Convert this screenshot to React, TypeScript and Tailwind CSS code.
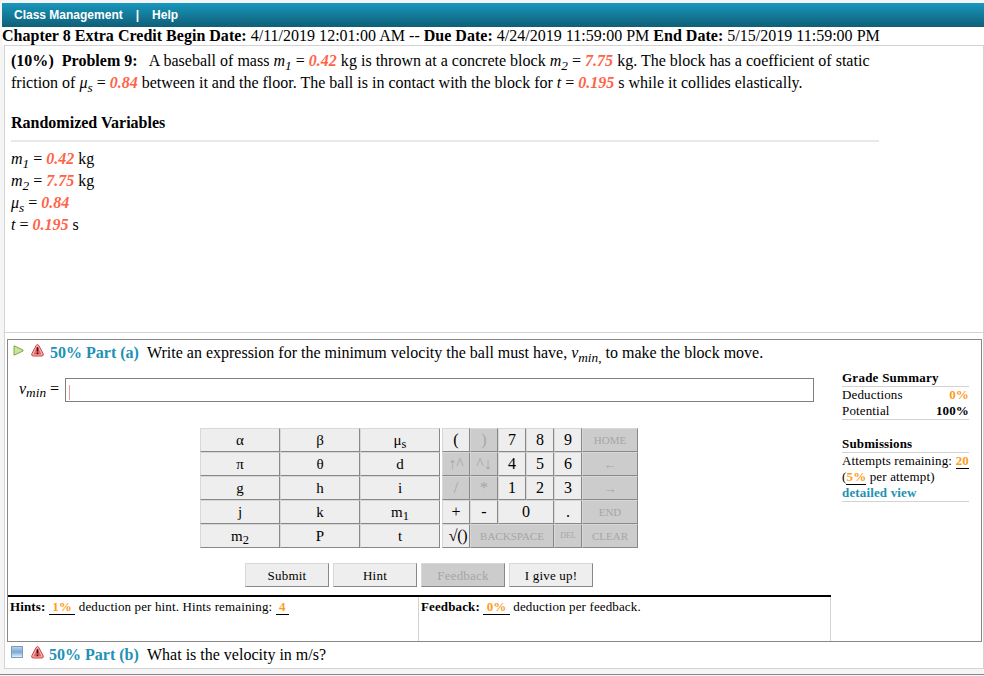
import React from 'react';
import { clsx } from 'clsx';

interface KeyDef {
  label: React.ReactNode;
  off?: boolean;
  className?: string;
}

const symbolKeys: KeyDef[] = [
  { label: 'α' },
  { label: 'β' },
  { label: <>μ<Sub>s</Sub></> },
  { label: 'π' },
  { label: 'θ' },
  { label: 'd' },
  { label: 'g' },
  { label: 'h' },
  { label: 'i' },
  { label: 'j' },
  { label: 'k' },
  { label: <>m<Sub>1</Sub></> },
  { label: <>m<Sub>2</Sub></> },
  { label: 'P' },
  { label: 't' },
];

const numberKeys: KeyDef[] = [
  { label: '(' },
  { label: ')', off: true },
  { label: '7' },
  { label: '8' },
  { label: '9' },
  { label: 'HOME', off: true, className: 'text-[11px]' },
  { label: '↑^', off: true },
  { label: '^↓', off: true },
  { label: '4' },
  { label: '5' },
  { label: '6' },
  { label: '←', off: true, className: 'text-[13px]' },
  { label: '/', off: true },
  { label: '*', off: true },
  { label: '1' },
  { label: '2' },
  { label: '3' },
  { label: '→', off: true, className: 'text-[13px]' },
  { label: '+' },
  { label: '-' },
  { label: '0', className: 'col-span-2' },
  { label: '.' },
  { label: 'END', off: true, className: 'text-[11px]' },
  { label: '√()', className: 'pl-1 tracking-[-0.3px]' },
  { label: 'BACKSPACE', off: true, className: 'col-span-3 text-[11px]' },
  { label: 'DEL', off: true, className: 'text-[8px]' },
  { label: 'CLEAR', off: true, className: 'text-[11px]' },
];

function Sub({ children }: { children: React.ReactNode }) {
  return <span className="relative top-[0.28em] text-[0.83em] leading-none">{children}</span>;
}

function Value({ children }: { children: React.ReactNode }) {
  return <b className="italic text-[#ff6347]">{children}</b>;
}

function Key({ label, off, className }: KeyDef) {
  return (
    <button
      className={clsx(
        'flex h-6 items-center justify-center whitespace-pre border border-t-[#d8d8d8] border-l-[#d8d8d8] border-r-[#888] border-b-[#888] leading-none',
        off ? 'bg-[#ccc] text-[#a6a6a6]' : 'bg-[#eee] text-black',
        className
      )}
    >
      <span>{label}</span>
    </button>
  );
}

function WarningIcon() {
  return (
    <svg width="13" height="13" viewBox="0 0 13 13">
      <path d="M5.3 1.3 Q6.5 -0.3 7.7 1.3 L12.2 9.8 Q12.8 12 10.8 12 H2.2 Q0.2 12 0.8 9.8 Z" fill="#f7b3b3" stroke="#cf3f3f" />
      <path d="M6.5 2.2 L10.6 10.4 H2.4 Z" fill="#dd6a6a" />
      <path d="M6.5 3.3 V7.5 M6.5 8.6 V10.2" stroke="#401010" strokeWidth="1.6" />
    </svg>
  );
}

function PlayIcon() {
  return (
    <svg width="11" height="11" viewBox="0 0 11 11">
      <path d="M1 0.8 L10 5 V6 L1 10.2 Z" fill="#c9e59b" stroke="#7fa843" strokeLinejoin="round" />
    </svg>
  );
}

function PendingIcon() {
  return (
    <span className="block h-3 w-3 border border-[#7d9dbf] bg-linear-to-b from-[#b8d2ee] via-[#78a7d8] to-[#e4effa]" />
  );
}

function GradeSummary() {
  return (
    <aside className="mt-[30px] ml-[28px] w-[127px] text-[13px] leading-4 tracking-[0.15px]">
      <h3 className="h-[17px] border-b border-[#d3d3d3] font-bold tracking-[0.25px]">Grade Summary</h3>
      <div className="flex justify-between">
        <span>Deductions</span>
        <b className="text-[#ff9c1a]">0%</b>
      </div>
      <div className="flex h-[17px] justify-between border-b border-[#d3d3d3]">
        <span>Potential</span>
        <b>100%</b>
      </div>
      <h3 className="mt-4 h-[17px] border-b border-[#d3d3d3] font-bold">Submissions</h3>
      <div className="flex justify-between whitespace-nowrap">
        <span>Attempts remaining:</span>
        <b className="h-4 border-b border-black text-[#ff9c1a]">20</b>
      </div>
      <div>
        (<b className="inline-block h-4 border-b border-black align-top text-[#ff9c1a]">5%</b> per attempt)
      </div>
      <div className="h-[17px] border-b border-[#d3d3d3] font-bold text-[#2191b5]">detailed view</div>
    </aside>
  );
}

export default function App() {
  return (
    <div className="flex h-[676px] w-[984px] flex-col overflow-hidden bg-[#f5f5f5] pt-[3px] font-['Liberation_Serif',serif] text-black">
      <nav className="ml-0.5 flex h-6 shrink-0 items-center bg-linear-to-b from-[#1898bd] to-[#0f5f78] pl-3 font-['Liberation_Sans',sans-serif] text-[12px] font-bold whitespace-pre text-white">
        <span>Class Management</span>
        <span className="mx-[13px]">|</span>
        <span>Help</span>
      </nav>
      <div className="ml-0.5 h-[18px] shrink-0 bg-white text-[16px] leading-[18px] tracking-[0.012px] whitespace-nowrap">
        <b>Chapter 8 Extra Credit Begin Date:</b> 4/11/2019 12:01:00 AM -- <b>Due Date:</b> 4/24/2019 11:59:00 PM{' '}
        <b>End Date:</b> 5/15/2019 11:59:00 PM
      </div>

      <main className="ml-1 h-[624px] w-[980px] shrink-0 border border-[#d3d3d3] bg-white">
        <section className="h-[287px] border-b border-[#d3d3d3] pt-1 pl-1.5 text-[16px] leading-[22px] whitespace-pre">
          <p className="h-[22px] tracking-[0.015px]">
            <b>(10%)  Problem 9:</b>   A baseball of mass <i>m<Sub>1</Sub></i> = <Value>0.42</Value> kg is thrown at a concrete block <i>m<Sub>2</Sub></i> = <Value>7.75</Value> kg. The block has a coefficient of static
          </p>
          <p className="h-[22px]">
            friction of <i>μ<Sub>s</Sub></i> = <Value>0.84</Value> between it and the floor. The ball is in contact with the block for <i>t</i> = <Value>0.195</Value> s while it collides elastically.
          </p>
          <h2 className="mt-[18px] font-bold">Randomized Variables</h2>
          <hr className="my-1.5 h-0.5 w-[868px] border-0 bg-[#e8e8e8]" />
          <p className="h-[22px]"><i>m<Sub>1</Sub></i> = <Value>0.42</Value> kg</p>
          <p className="h-[22px]"><i>m<Sub>2</Sub></i> = <Value>7.75</Value> kg</p>
          <p className="h-[22px]"><i>μ<Sub>s</Sub></i> = <Value>0.84</Value></p>
          <p className="h-[22px]"><i>t</i> = <Value>0.195</Value> s</p>
        </section>

        <section className="mt-1.5 ml-0.5 flex h-[303px] w-[975px] border border-[#888]">
          <div className="flex w-[806px] shrink-0 flex-col">
            <div className="flex h-[26px] pl-[5px] text-[16px] leading-[26px] whitespace-pre">
              <span className="mt-[5px] w-[18px]"><PlayIcon /></span>
              <span className="mt-1 w-[19px]"><WarningIcon /></span>
              <b className="w-[97px] text-[#2191b5]">50% Part (a)</b>
              <span>Write an expression for the minimum velocity the ball must have, <i>v</i><Sub><i>min</i>,</Sub> to make the block move.</span>
            </div>
            <div className="mt-3 flex h-6 items-center pl-[11px] text-[16px]">
              <span className="w-[46px] pb-[3px] whitespace-nowrap"><i>v<Sub>min</Sub></i> =</span>
              <div className="flex h-6 w-[749px] shrink-0 items-center border border-[#808080] pl-[3px]">
                <span className="mt-1 h-[15px] w-px bg-[#f19aa0]" />
              </div>
            </div>
            <div className="mt-[26px] ml-48 flex gap-0.5 text-[15px]">
              <div className="grid grid-cols-[repeat(3,80px)]">
                {symbolKeys.map((key, i) => <Key key={i} {...key} />)}
              </div>
              <div className="grid grid-cols-[repeat(5,28px)_56px] text-[16px]">
                {numberKeys.map((key, i) => <Key key={i} {...key} />)}
              </div>
            </div>
            <div className="mt-[15px] ml-[237px] grid grid-cols-[repeat(4,84px)] gap-1 text-[13px] tracking-[0.2px]">
              <Key label="Submit" />
              <Key label="Hint" />
              <Key label="Feedback" off />
              <Key label="I give up!" />
            </div>
            <div className="mt-2 flex h-[46px] w-[823px] border-t-2 border-black text-[13px] leading-5 tracking-[0.13px] whitespace-pre">
              <div className="w-[411px] border-r border-[#d3d3d3] pl-0.5">
                <b>Hints:</b> <b className="inline-block h-[18px] border-b border-black align-top text-[#ff9c1a]"> 1% </b> deduction per hint. Hints remaining: <b className="inline-block h-[18px] border-b border-black align-top text-[#ff9c1a]"> 4 </b>
              </div>
              <div className="w-[412px] border-r border-[#d3d3d3] pl-0.5">
                <b>Feedback:</b> <b className="inline-block h-[18px] border-b border-black align-top text-[#ff9c1a]"> 0% </b> deduction per feedback.
              </div>
            </div>
          </div>
          <GradeSummary />
        </section>

        <section className="flex h-[26px] pl-1.5 text-[16px] leading-[26px] whitespace-pre">
          <span className="mt-1 w-5"><PendingIcon /></span>
          <span className="mt-1 w-[18px]"><WarningIcon /></span>
          <b className="w-[98px] text-[#2191b5]">50% Part (b)</b>
          <span>What is the velocity in m/s?</span>
        </section>
      </main>
      <footer className="mt-[5px] h-px shrink-0 bg-[#888]" />
    </div>
  );
}
